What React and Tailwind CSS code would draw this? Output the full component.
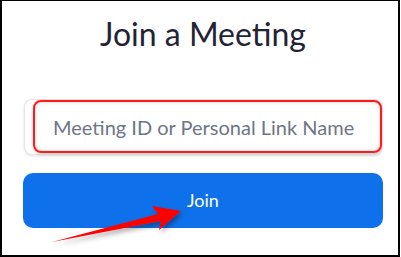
import React from "react";

function Arrow() {
  return (
    <svg
      className="absolute left-0 top-0 pointer-events-none"
      width="400"
      height="257"
      viewBox="0 0 400 257"
    >
      <defs>
        <filter id="sh" x="-20%" y="-50%" width="140%" height="200%">
          <feDropShadow dx="2" dy="3" stdDeviation="2.5" floodColor="#000" floodOpacity="0.35" />
        </filter>
      </defs>
      <polygon
        points="50,241 156,213 150,205 179,210 157,229 159,220"
        fill="#ff0000"
        filter="url(#sh)"
      />
    </svg>
  );
}

export default function App() {
  return (
    <div
      className="relative w-[400px] h-[257px] bg-white border-l-2 border-r-2 border-t border-b-2 border-black overflow-hidden"
      style={{ fontFamily: "Lato, 'Open Sans', sans-serif" }}
    >
      <h1 className="pt-[13px] pl-[6px] text-center text-[32px] leading-[40px] text-[#232333] font-normal">
        Join a Meeting
      </h1>

      <div className="mt-[45px] pl-[22px] pr-[16px]">
        <div className="relative h-[56px] rounded-[8px] border border-[#e6e6e6] bg-white shadow-[0_1px_3px_rgba(0,0,0,0.12)] flex items-center">
          <span className="pl-[28px] text-[20px] text-[#6e7687] whitespace-nowrap">
            Meeting ID or Personal Link Name
          </span>
          <div className="absolute left-[8px] top-[0px] w-[349px] h-[53px] rounded-[8px] border-2 border-[#ff1a1a] shadow-[inset_0_0_4px_rgba(0,0,0,0.18),0_1px_3px_rgba(0,0,0,0.2)]" />
        </div>
      </div>

      <div className="mt-[18px] pl-[21px] pr-[15px]">
        <button className="w-full h-[55px] rounded-[10px] bg-[#0e71eb] text-white text-[18px] flex items-center justify-center">
          Join
        </button>
      </div>

      <Arrow />
    </div>
  );
}
